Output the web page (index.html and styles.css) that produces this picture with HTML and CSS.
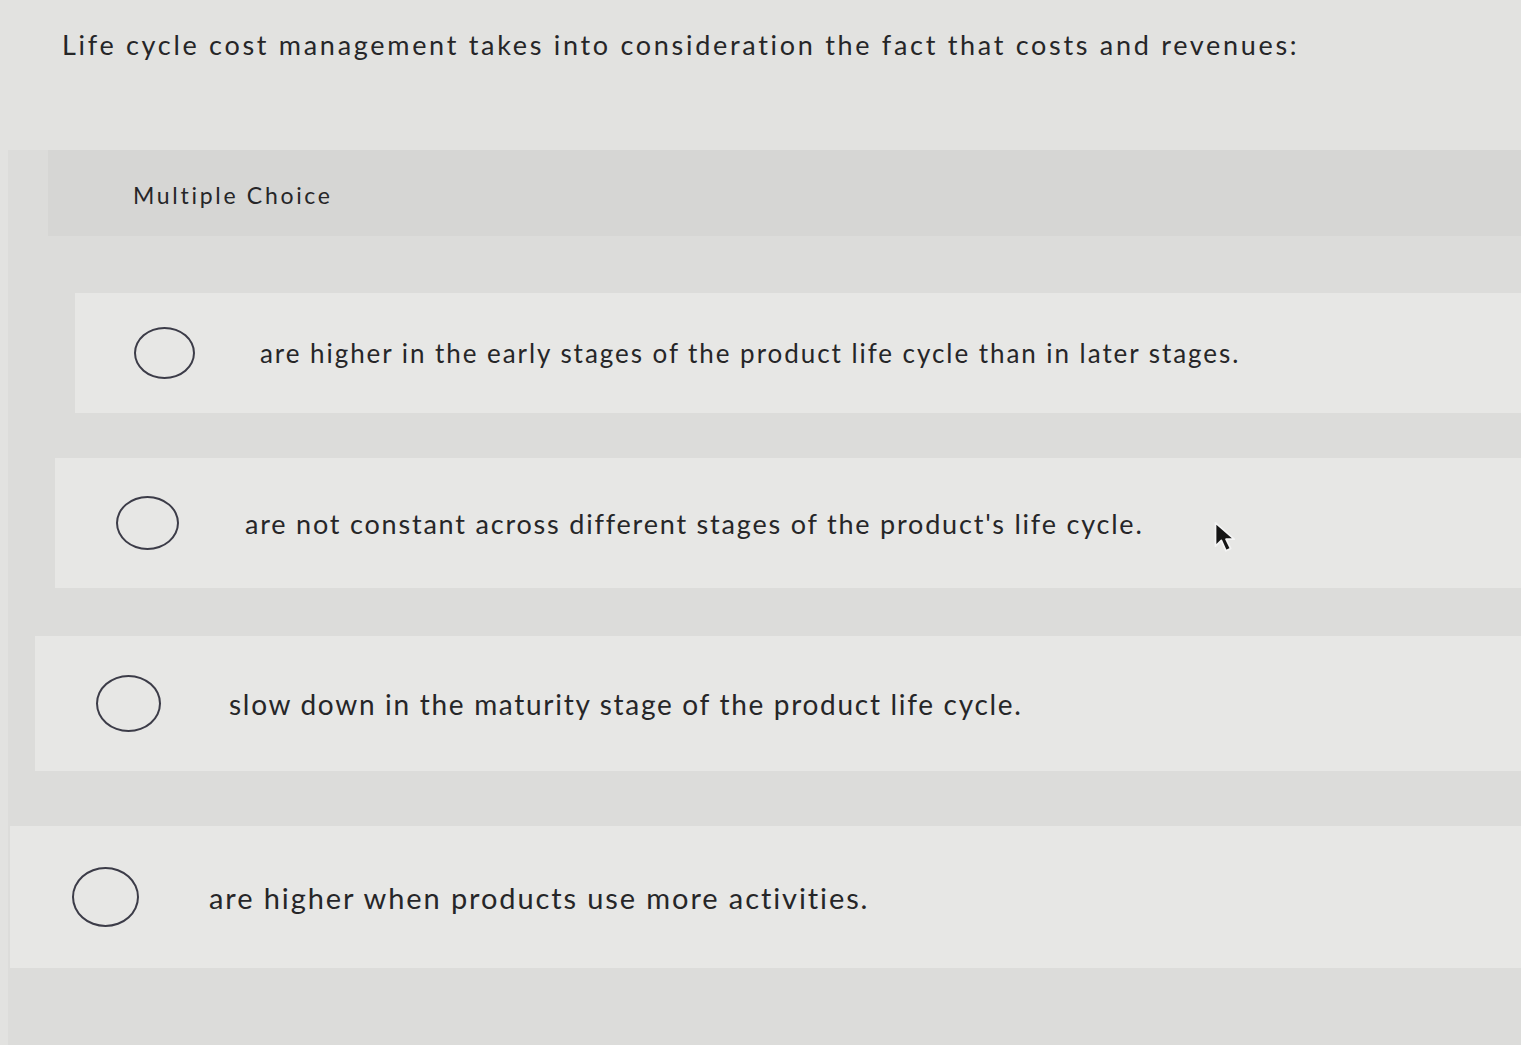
FILE: index.html
```html
<!DOCTYPE html>
<html lang="en">
<head>
<meta charset="utf-8">
<title>Multiple Choice</title>
<link rel="stylesheet" href="styles.css">
</head>
<body>
<main class="page">
  <h1 class="question">Life cycle cost management takes into consideration the fact that costs and revenues:</h1>
  <section class="card">
    <div class="mc-head">Multiple Choice</div>
    <div class="options">
      <label class="option o1"><span class="radio"></span><span class="label">are higher in the early stages of the product life cycle than in later stages.</span></label>
      <label class="option o2"><span class="radio"></span><span class="label">are not constant across different stages of the product's life cycle.</span>
        <svg class="cursor" width="28" height="36" viewBox="0 0 24 30"><path d="M3 2 L3 22 L8 17 L12 26 L16 24 L12 16 L19 16 Z" fill="#151515" stroke="#f4f4f4" stroke-width="1.5" stroke-linejoin="round"/></svg>
      </label>
      <label class="option o3"><span class="radio"></span><span class="label">slow down in the maturity stage of the product life cycle.</span></label>
      <label class="option o4"><span class="radio"></span><span class="label">are higher when products use more activities.</span></label>
    </div>
  </section>
</main>
</body>
</html>
```
FILE: styles.css
```css
html, body {
  margin: 0;
  padding: 0;
}
body {
  background: #e2e2e0;
  font-family: Lato, "Open Sans", sans-serif;
  color: #262628;
  width: 1521px;
  height: 1045px;
  overflow: hidden;
}
.page {
  display: flex;
  flex-direction: column;
}
.question {
  margin: 0;
  padding: 29px 0 0 62px;
  font-size: 27px;
  line-height: 32px;
  font-weight: 400;
  letter-spacing: 2.7px;
  white-space: nowrap;
}
.card {
  margin: 89px 0 0 8px;
  background: #dcdcda;
  padding-bottom: 80px;
}
.mc-head {
  margin-left: 40px;
  height: 86px;
  background: #d6d6d4;
  display: flex;
  align-items: center;
  padding-left: 85px;
  font-size: 23px;
  letter-spacing: 2.7px;
  padding-top: 4px;
  box-sizing: border-box;
}
.options {
  display: flex;
  flex-direction: column;
  padding-top: 57px;
}
.option {
  display: flex;
  align-items: center;
  background: #e7e7e5;
  position: relative;
}
.radio {
  flex: none;
  border: 2px solid #3c3c48;
  border-radius: 50%;
  box-sizing: border-box;
}
.label {
  white-space: nowrap;
}
.o1 {
  margin-left: 67px;
  height: 120px;
  padding-left: 59px;
}
.o1 .radio { width: 61px; height: 52px; margin-right: 65px; }
.o1 .label { font-size: 26px; letter-spacing: 1.95px; }
.o2 {
  margin-left: 47px;
  margin-top: 45px;
  height: 130px;
  padding-left: 61px;
}
.o2 .radio { width: 63px; height: 54px; margin-right: 66px; }
.o2 .label { font-size: 27px; letter-spacing: 1.8px; }
.o3 {
  margin-left: 27px;
  margin-top: 48px;
  height: 135px;
  padding-left: 61px;
}
.o3 .radio { width: 65px; height: 57px; margin-right: 68px; }
.o3 .label { font-size: 28px; letter-spacing: 1.7px; }
.o4 {
  margin-left: 2px;
  margin-top: 55px;
  height: 142px;
  padding-left: 62px;
}
.o4 .radio { width: 67px; height: 60px; margin-right: 70px; }
.o4 .label { font-size: 29px; letter-spacing: 1.9px; }
.cursor {
  position: absolute;
  left: 1157px;
  top: 62px;
}
```
